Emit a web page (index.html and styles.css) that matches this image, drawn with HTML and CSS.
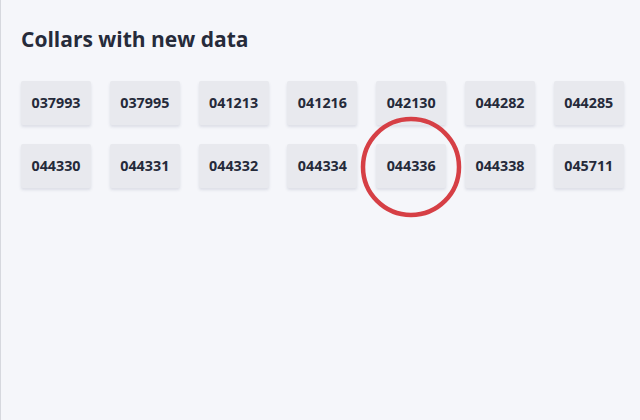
FILE: index.html
```html
<!DOCTYPE html>
<html>
<head>
<meta charset="utf-8">
<link rel="stylesheet" href="styles.css">
</head>
<body>
<main class="page">
  <h1 class="title">Collars with new data</h1>
  <div class="chips">
    <div class="chip">037993</div>
    <div class="chip">037995</div>
    <div class="chip">041213</div>
    <div class="chip">041216</div>
    <div class="chip">042130</div>
    <div class="chip">044282</div>
    <div class="chip">044285</div>
    <div class="chip">044330</div>
    <div class="chip">044331</div>
    <div class="chip">044332</div>
    <div class="chip">044334</div>
    <div class="chip">044336</div>
    <div class="chip">044338</div>
    <div class="chip">045711</div>
  </div>
  <svg class="ring" width="104" height="104" viewBox="0 0 104 104">
    <circle cx="52" cy="52" r="48" fill="none" stroke="#d63f45" stroke-width="4.5"/>
  </svg>
</main>
</body>
</html>
```

FILE: styles.css
```css
html, body {
  margin: 0;
  padding: 0;
  height: 100%;
}
body {
  background: #f5f6fa;
  font-family: "Open Sans", "Noto Sans", sans-serif;
  color: #262b3a;
}
.page {
  position: relative;
  box-sizing: border-box;
  height: 420px;
  border-left: 1px solid #d6d8de;
  padding: 25px 0 0 20px;
  overflow: hidden;
}
.title {
  margin: 0;
  font-size: 21px;
  line-height: 28px;
  font-weight: 700;
  color: #262b3a;
}
.chips {
  margin-top: 28px;
  display: grid;
  grid-template-columns: repeat(7, 70px);
  column-gap: 18.8px;
  row-gap: 19px;
}
.chip {
  height: 44px;
  line-height: 44px;
  text-align: center;
  background: #e8e9ee;
  border-radius: 2px;
  box-shadow: 0 2px 3px rgba(40, 50, 90, 0.12);
  font-size: 14.3px;
  font-weight: 700;
  color: #252a3a;
}
.ring {
  position: absolute;
  left: 358px;
  top: 115px;
}
```
